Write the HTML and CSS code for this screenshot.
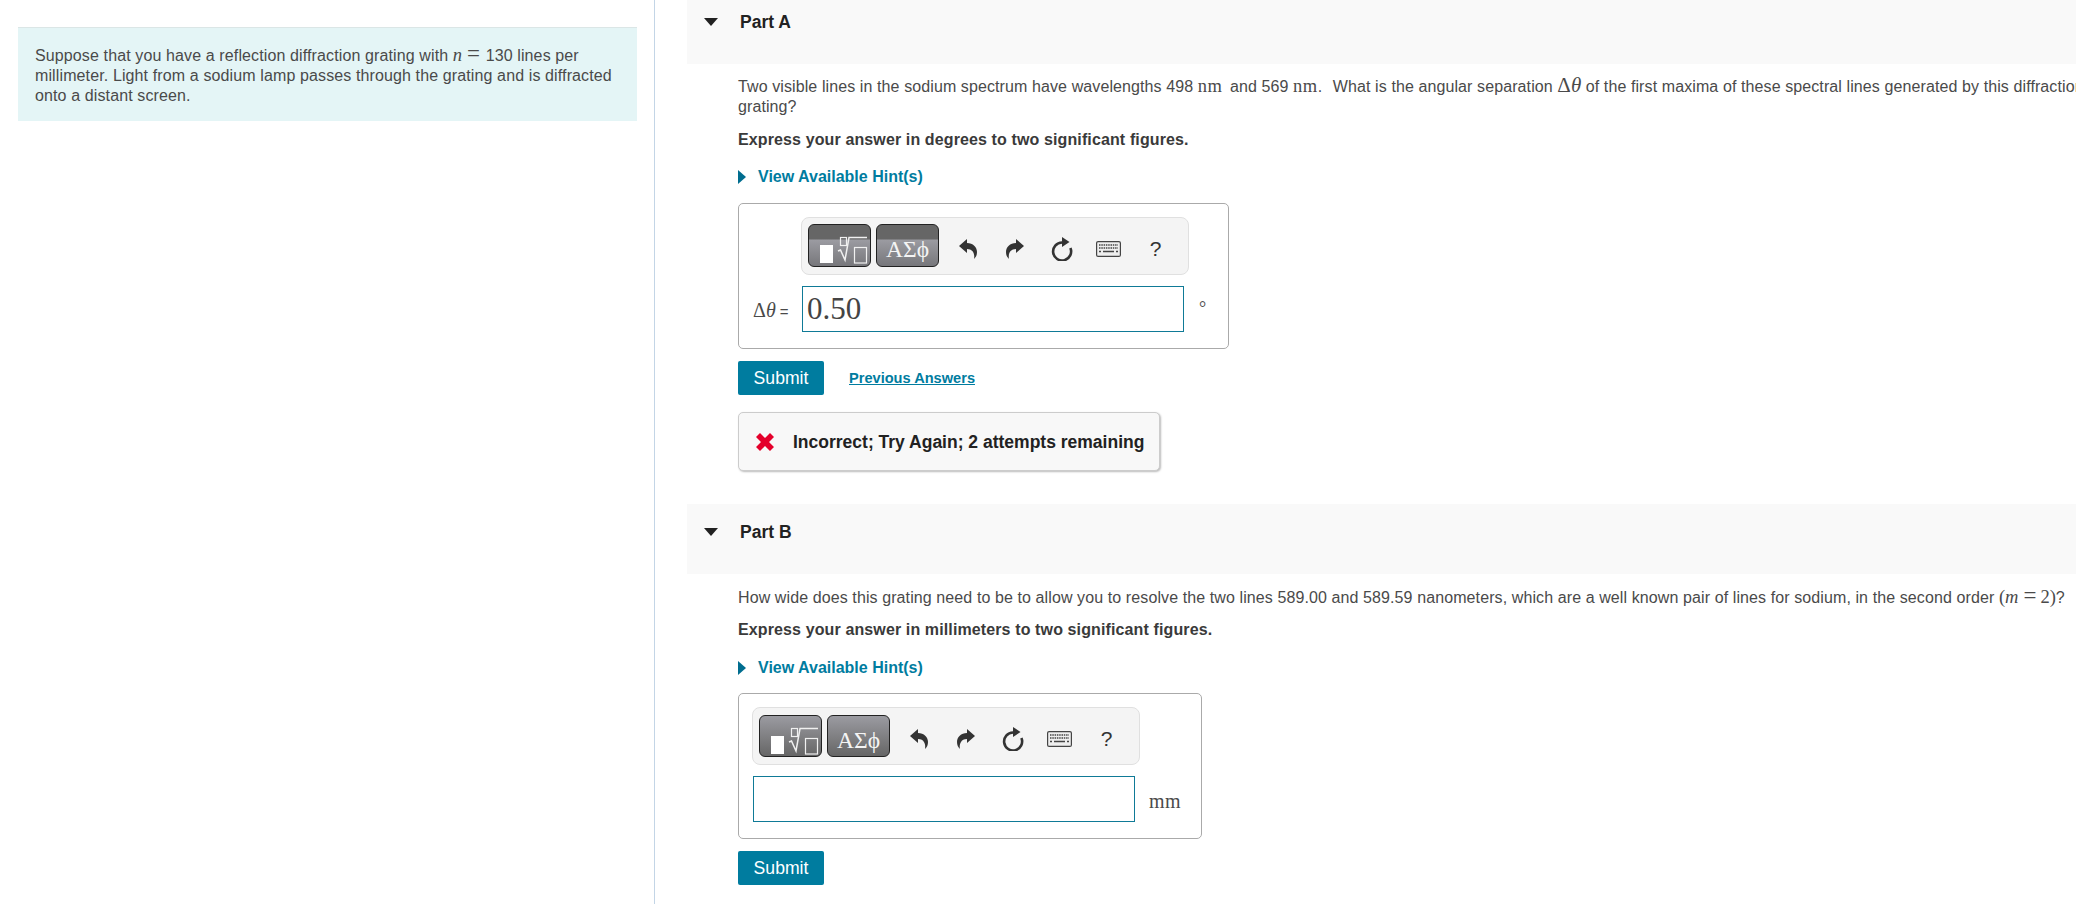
FILE: index.html
```html
<!DOCTYPE html>
<html lang="en">
<head>
<meta charset="utf-8">
<title>Reflection diffraction grating</title>
<link rel="stylesheet" href="styles.css">
</head>
<body>
<svg class="defs" width="0" height="0" aria-hidden="true">
  <symbol id="i-undo" viewBox="0 0 18 20"><path d="M0 7 8 0V4C14 4 18 8 18 13 18 16 17 18 15 20 16 15 14 10 8 10V14Z"/></symbol>
  <symbol id="i-redo" viewBox="0 0 18 20"><path d="M18 7 10 0V4C4 4 0 8 0 13 0 16 1 18 3 20 2 15 4 10 10 10V14Z"/></symbol>
  <symbol id="i-refresh" viewBox="0 0 24 24"><path d="M12 5.5A9 9 0 1 0 20.4 11" fill="none" stroke="#333" stroke-width="2.6"/><path d="M12 0 19.5 5 12 10Z"/></symbol>
  <symbol id="i-keyboard" viewBox="0 0 25 16"><rect x=".6" y=".6" width="23.8" height="14.8" rx="1.5" fill="#eee" stroke="#444" stroke-width="1.2"/><path d="M3 4H22M3 7H22" stroke="#444" stroke-width="1.5" stroke-dasharray="1.5 .8" fill="none"/><path d="M3 10.5H5M7 10.5H18M20 10.5H22" stroke="#444" stroke-width="1.6" fill="none"/></symbol>
  <symbol id="i-root" viewBox="0 0 61 41"><rect x="11" y="20" width="13" height="18" fill="#fff"/><rect x="31.5" y="12.5" width="6" height="8" fill="none" stroke="#f0f0f0" stroke-width="1.2"/><path d="M29 26 31.5 25 36 35 40 12.5H58" fill="none" stroke="#f0f0f0" stroke-width="1.5"/><rect x="45.5" y="22.5" width="12" height="15.5" fill="none" stroke="#f0f0f0" stroke-width="1.2"/></symbol>
</svg>
<div class="page">
  <aside class="intro">
    <div class="intro-box">
      <p>Suppose that you have a reflection diffraction grating with <span class="math"><i>n</i><span class="eq">=</span></span> 130 lines per millimeter. Light from a sodium lamp passes through the grating and is diffracted onto a distant screen.</p>
    </div>
  </aside>
  <main class="parts">
    <section class="part">
      <header class="part-head"><span class="caret"></span><h2>Part A</h2></header>
      <div class="part-body">
        <p class="question">Two visible lines in the sodium spectrum have wavelengths 498 <span class="math math--unit">nm</span> and 569 <span class="math math--unit math--end">nm</span><span class="stop">.</span> What is the angular separation <span class="delta">Δ<i>θ</i></span> of the first maxima of these spectral lines generated by this diffraction grating?</p>
        <p class="instruction">Express your answer in degrees to two significant figures.</p>
        <a class="hint"><span class="hint-caret"></span>View Available Hint(s)</a>
        <div class="answer-box answer-box--labeled">
          <div class="toolbar">
            <button class="tool-btn tool-btn--active"><svg class="root-icon"><use href="#i-root"/></svg></button>
            <button class="tool-btn tool-btn--active tool-btn--text">ΑΣϕ</button>
            <span class="tool"><svg class="arrow"><use href="#i-undo"/></svg></span>
            <span class="tool"><svg class="arrow"><use href="#i-redo"/></svg></span>
            <span class="tool"><svg class="refresh"><use href="#i-refresh"/></svg></span>
            <span class="tool"><svg class="keyboard"><use href="#i-keyboard"/></svg></span>
            <span class="tool tool--help">?</span>
          </div>
          <label class="answer-label"><span class="serif">Δ<i>θ</i></span> =</label>
          <div class="answer-input">0.50</div>
          <span class="unit unit--degree">°</span>
        </div>
        <div class="actions">
          <button class="submit">Submit</button>
          <a class="previous">Previous Answers</a>
        </div>
        <div class="feedback">
          <svg class="cross" viewBox="0 0 18 18"><path d="M0 4 4 0 9 5 14 0 18 4 13 9 18 14 14 18 9 13 4 18 0 14 5 9Z"/></svg>
          <span>Incorrect; Try Again; 2 attempts remaining</span>
        </div>
      </div>
    </section>
    <section class="part part--b">
      <header class="part-head"><span class="caret"></span><h2>Part B</h2></header>
      <div class="part-body">
        <p class="question">How wide does this grating need to be to allow you to resolve the two lines 589.00 and 589.59 nanometers, which are a well known pair of lines for sodium, in the second order <span class="math">(<i>m</i><span class="eq">=</span>2)</span>?</p>
        <p class="instruction">Express your answer in millimeters to two significant figures.</p>
        <a class="hint"><span class="hint-caret"></span>View Available Hint(s)</a>
        <div class="answer-box">
          <div class="toolbar">
            <button class="tool-btn"><svg class="root-icon"><use href="#i-root"/></svg></button>
            <button class="tool-btn tool-btn--text">ΑΣϕ</button>
            <span class="tool"><svg class="arrow"><use href="#i-undo"/></svg></span>
            <span class="tool"><svg class="arrow"><use href="#i-redo"/></svg></span>
            <span class="tool"><svg class="refresh"><use href="#i-refresh"/></svg></span>
            <span class="tool"><svg class="keyboard"><use href="#i-keyboard"/></svg></span>
            <span class="tool tool--help">?</span>
          </div>
          <div class="answer-input"></div>
          <span class="unit">mm</span>
        </div>
        <div class="actions">
          <button class="submit">Submit</button>
        </div>
      </div>
    </section>
  </main>
</div>
</body>
</html>
```
FILE: styles.css
```css
* { box-sizing: border-box; }
html, body { margin: 0; height: 904px; overflow: hidden; background: #fff; }
body { font: 16px/20px "Liberation Sans", Arial, sans-serif; color: #4a4a4a; }
p { margin: 0; }
.defs { position: absolute; }

.page { display: flex; width: 2076px; height: 904px; overflow: hidden; }
.intro { flex: 0 0 655px; height: 904px; padding: 27px 17px 0 18px; border-right: 1px solid #c3d5e6; }
.intro-box { height: 94px; padding: 18px 17px 0; background: #e4f5f6; border-top: 1px solid #dbe6e6; letter-spacing: .12px; }
.parts { flex: 0 0 1500px; margin-left: 32px; }

.part-head { display: flex; align-items: flex-start; height: 64px; padding: 12px 0 0 17px; background: #f9f9f9; }
.part--b { margin-top: 33px; }
.part--b .part-head { height: 70px; padding-top: 18px; }
.part-head h2 { margin: 0 0 0 22px; font-size: 17.5px; line-height: 20px; font-weight: 700; color: #222; }
.caret { width: 0; height: 0; margin-top: 6px; border: 7px solid transparent; border-top: 8px solid #222; border-bottom: 0; }

.part-body { padding: 13px 0 0 51px; }
.part--b .part-body { padding-top: 14px; }
.question { width: 1364px; letter-spacing: .1px; }
.instruction { margin-top: 13px; font-weight: 700; color: #3a3a3a; letter-spacing: .12px; }
.part--b .instruction { margin-top: 12px; }
.hint { display: flex; align-items: center; height: 20px; margin-top: 17px; font-weight: 700; color: #007c9f; }
.part--b .hint { margin-top: 18px; }
.hint-caret { width: 0; height: 0; margin-right: 12px; border: 7px solid transparent; border-left: 8px solid #006d8f; border-right: 0; }

.math { font-family: "Liberation Serif", serif; font-size: 18.5px; line-height: 0; letter-spacing: 0; }
.math i { margin-right: 4px; }
.math--unit { margin-right: 3px; letter-spacing: .5px; }
.math--end { margin-right: 0; }
.stop { margin-right: 6px; }
.eq { margin: 0 1px; font-size: 23px; }
.part--b .eq { margin-right: 4px; }
.delta { font-family: "Liberation Serif", serif; font-size: 21px; line-height: 0; letter-spacing: 0; }
.delta i { margin-right: 0; }
.serif { font-family: "Liberation Serif", serif; font-size: 20px; }

.answer-box { display: grid; grid-template-columns: 383px auto; align-content: start; row-gap: 11px; align-items: center; width: 464px; height: 146px; margin-top: 16px; padding: 13px 0 0 13px; border: 1px solid #aaa; border-radius: 5px; }
.part--b .answer-box { margin-top: 15px; }
.answer-box--labeled { grid-template-columns: 49px 383px auto; width: 491px; }
.toolbar { grid-column: 1 / -1; display: flex; align-items: flex-end; width: 388px; height: 58px; padding: 0 0 7px 6px; background: #f4f4f4; border: 1px solid #e0e0e0; border-radius: 8px; }
.answer-box--labeled .toolbar { grid-column: 2 / -1; }
.tool-btn { display: block; width: 63px; height: 42px; margin: 0 5px 0 0; padding: 0; border: 1px solid #222; border-radius: 6px; background: linear-gradient(#9b9ba1, #666); color: #f4f4f4; font: 23.5px/40px "Liberation Serif", serif; }
.tool-btn--active { height: 43px; background: linear-gradient(#666 0 14px, #9b9ba1 15px, #77777b); }
.tool-btn--text { padding-top: 4px; }
.root-icon { display: block; width: 61px; height: 41px; }
.tool { display: flex; align-items: center; justify-content: center; flex: 0 0 47px; height: 36px; fill: #333; color: #333; }
.arrow { width: 18px; height: 20px; }
.refresh { width: 24px; height: 24px; }
.keyboard { width: 25px; height: 16px; }
.tool--help { font-size: 21px; }

.answer-label { white-space: nowrap; font-size: 15px; padding: 4px 0 0 1px; }
.answer-input { height: 46px; margin-left: 1px; padding-left: 4px; border: 1.5px solid #0f7a97; font: 31px/43px "Liberation Serif", serif; color: #444; background: #fff; }
.unit { margin-left: 14px; padding-top: 3px; font: 20px/20px "Liberation Serif", serif; letter-spacing: .5px; }
.unit--degree { margin-left: 15px; margin-top: -6px; font-size: 18px; }

.actions { display: flex; align-items: center; margin-top: 12px; }
.submit { width: 86px; height: 34px; padding: 0; border: 0; border-radius: 2px; background: #007c9f; color: #fff; font: 17.6px/34px "Liberation Sans", Arial, sans-serif; }
.previous { margin-left: 25px; font-weight: 700; font-size: 14.6px; color: #007c9f; text-decoration: underline; }

.feedback { display: flex; align-items: center; gap: 19px; width: 422px; height: 59px; margin-top: 17px; padding-left: 17px; background: #f8f8f8; border: 1px solid #ccc; border-radius: 5px; box-shadow: 1px 1px 2px #bbb; font-size: 17.5px; font-weight: 700; color: #222; }
.cross { flex: none; width: 18px; height: 18px; fill: #e4002b; }
```
